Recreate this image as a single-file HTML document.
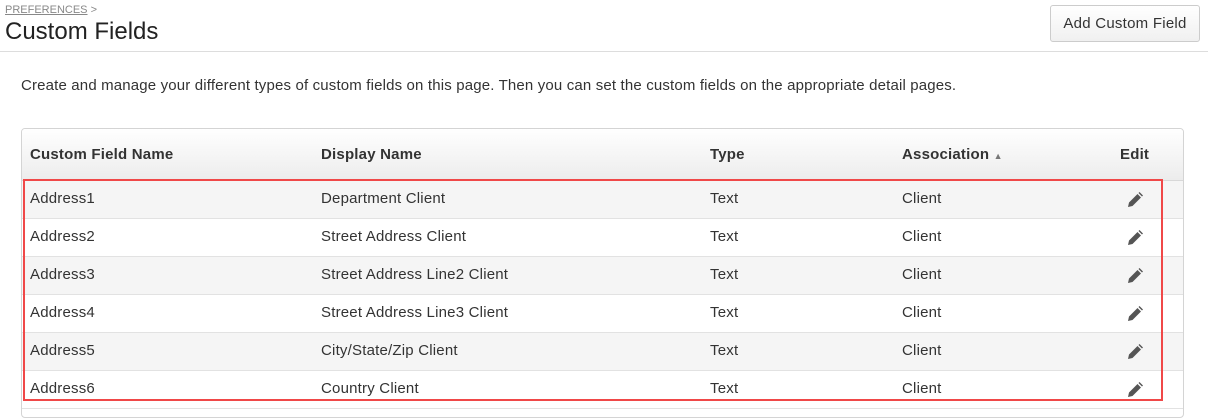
<!DOCTYPE html>
<html><head><style>
body{margin:0;width:1208px;height:410px;overflow:hidden;background:#fff;font-family:"Liberation Sans",Arial,sans-serif;color:#333;position:relative}
.a{position:absolute}
.bc{left:5px;top:4px;font-size:11px;color:#888}
.bc span{text-decoration:underline}
h1{position:absolute;left:5px;top:18px;margin:0;font-size:24px;font-weight:normal;color:#222}
.hr{left:0;top:51px;width:1208px;height:1px;background:#ddd}
.btn{left:1050px;top:5px;width:150px;height:37px;border:1px solid #ccc;border-radius:3px;background:linear-gradient(#fff,#f0f0f0);box-sizing:border-box;font-size:15px;letter-spacing:.25px;text-align:center;line-height:35px;color:#333}
.desc{left:21px;top:77px;font-size:15px;letter-spacing:.16px;color:#333}
.tbl{left:21px;top:128px;width:1163px;height:290px;border:1px solid #d4d4d4;border-radius:4px;box-sizing:border-box;overflow:hidden;letter-spacing:.2px}
.hd{height:51px;background:linear-gradient(#fff,#ececec);border-bottom:1px solid #d8d8d8;position:relative;font-weight:bold;font-size:15px}
.row{height:38px;border-bottom:1px solid #e2e2e2;position:relative;font-size:15px;box-sizing:border-box}
.row:nth-child(odd){background:#f5f5f5}
.c{position:absolute;top:-1px;line-height:38px}
.hd .c{line-height:51px;top:0}
.red{left:23px;top:179px;width:1140px;height:222px;border:2px solid #f04848;box-sizing:border-box}
svg{position:absolute;left:1105px;top:11px}
</style></head><body>
<div class="a bc"><span>PREFERENCES</span> &gt;</div>
<h1>Custom Fields</h1>
<div class="a hr"></div>
<div class="a btn">Add Custom Field</div>
<div class="a desc">Create and manage your different types of custom fields on this page. Then you can set the custom fields on the appropriate detail pages.</div>
<div class="a tbl">
<div class="hd"><span class="c" style="left:8px">Custom Field Name</span><span class="c" style="left:299px">Display Name</span><span class="c" style="left:688px">Type</span><span class="c" style="left:880px">Association <span style="font-size:9px;color:#777">&#9650;</span></span><span class="c" style="left:1098px">Edit</span></div>
<div>
<div class="row"><span class="c" style="left:8px">Address1</span><span class="c" style="left:299px">Department Client</span><span class="c" style="left:688px">Text</span><span class="c" style="left:880px">Client</span><svg width="16" height="16" viewBox="0 0 16 16"><path d="M1 15l1-4.5 8.5-8.5 3.5 3.5-8.5 8.5z M11.5 1l1-1 3.5 3.5-1 1z" fill="#555"/></svg></div>
<div class="row"><span class="c" style="left:8px">Address2</span><span class="c" style="left:299px">Street Address Client</span><span class="c" style="left:688px">Text</span><span class="c" style="left:880px">Client</span><svg width="16" height="16" viewBox="0 0 16 16"><path d="M1 15l1-4.5 8.5-8.5 3.5 3.5-8.5 8.5z M11.5 1l1-1 3.5 3.5-1 1z" fill="#555"/></svg></div>
<div class="row"><span class="c" style="left:8px">Address3</span><span class="c" style="left:299px">Street Address Line2 Client</span><span class="c" style="left:688px">Text</span><span class="c" style="left:880px">Client</span><svg width="16" height="16" viewBox="0 0 16 16"><path d="M1 15l1-4.5 8.5-8.5 3.5 3.5-8.5 8.5z M11.5 1l1-1 3.5 3.5-1 1z" fill="#555"/></svg></div>
<div class="row"><span class="c" style="left:8px">Address4</span><span class="c" style="left:299px">Street Address Line3 Client</span><span class="c" style="left:688px">Text</span><span class="c" style="left:880px">Client</span><svg width="16" height="16" viewBox="0 0 16 16"><path d="M1 15l1-4.5 8.5-8.5 3.5 3.5-8.5 8.5z M11.5 1l1-1 3.5 3.5-1 1z" fill="#555"/></svg></div>
<div class="row"><span class="c" style="left:8px">Address5</span><span class="c" style="left:299px">City/State/Zip Client</span><span class="c" style="left:688px">Text</span><span class="c" style="left:880px">Client</span><svg width="16" height="16" viewBox="0 0 16 16"><path d="M1 15l1-4.5 8.5-8.5 3.5 3.5-8.5 8.5z M11.5 1l1-1 3.5 3.5-1 1z" fill="#555"/></svg></div>
<div class="row"><span class="c" style="left:8px">Address6</span><span class="c" style="left:299px">Country Client</span><span class="c" style="left:688px">Text</span><span class="c" style="left:880px">Client</span><svg width="16" height="16" viewBox="0 0 16 16"><path d="M1 15l1-4.5 8.5-8.5 3.5 3.5-8.5 8.5z M11.5 1l1-1 3.5 3.5-1 1z" fill="#555"/></svg></div>
</div></div>
<div class="a red"></div>
</body></html>
